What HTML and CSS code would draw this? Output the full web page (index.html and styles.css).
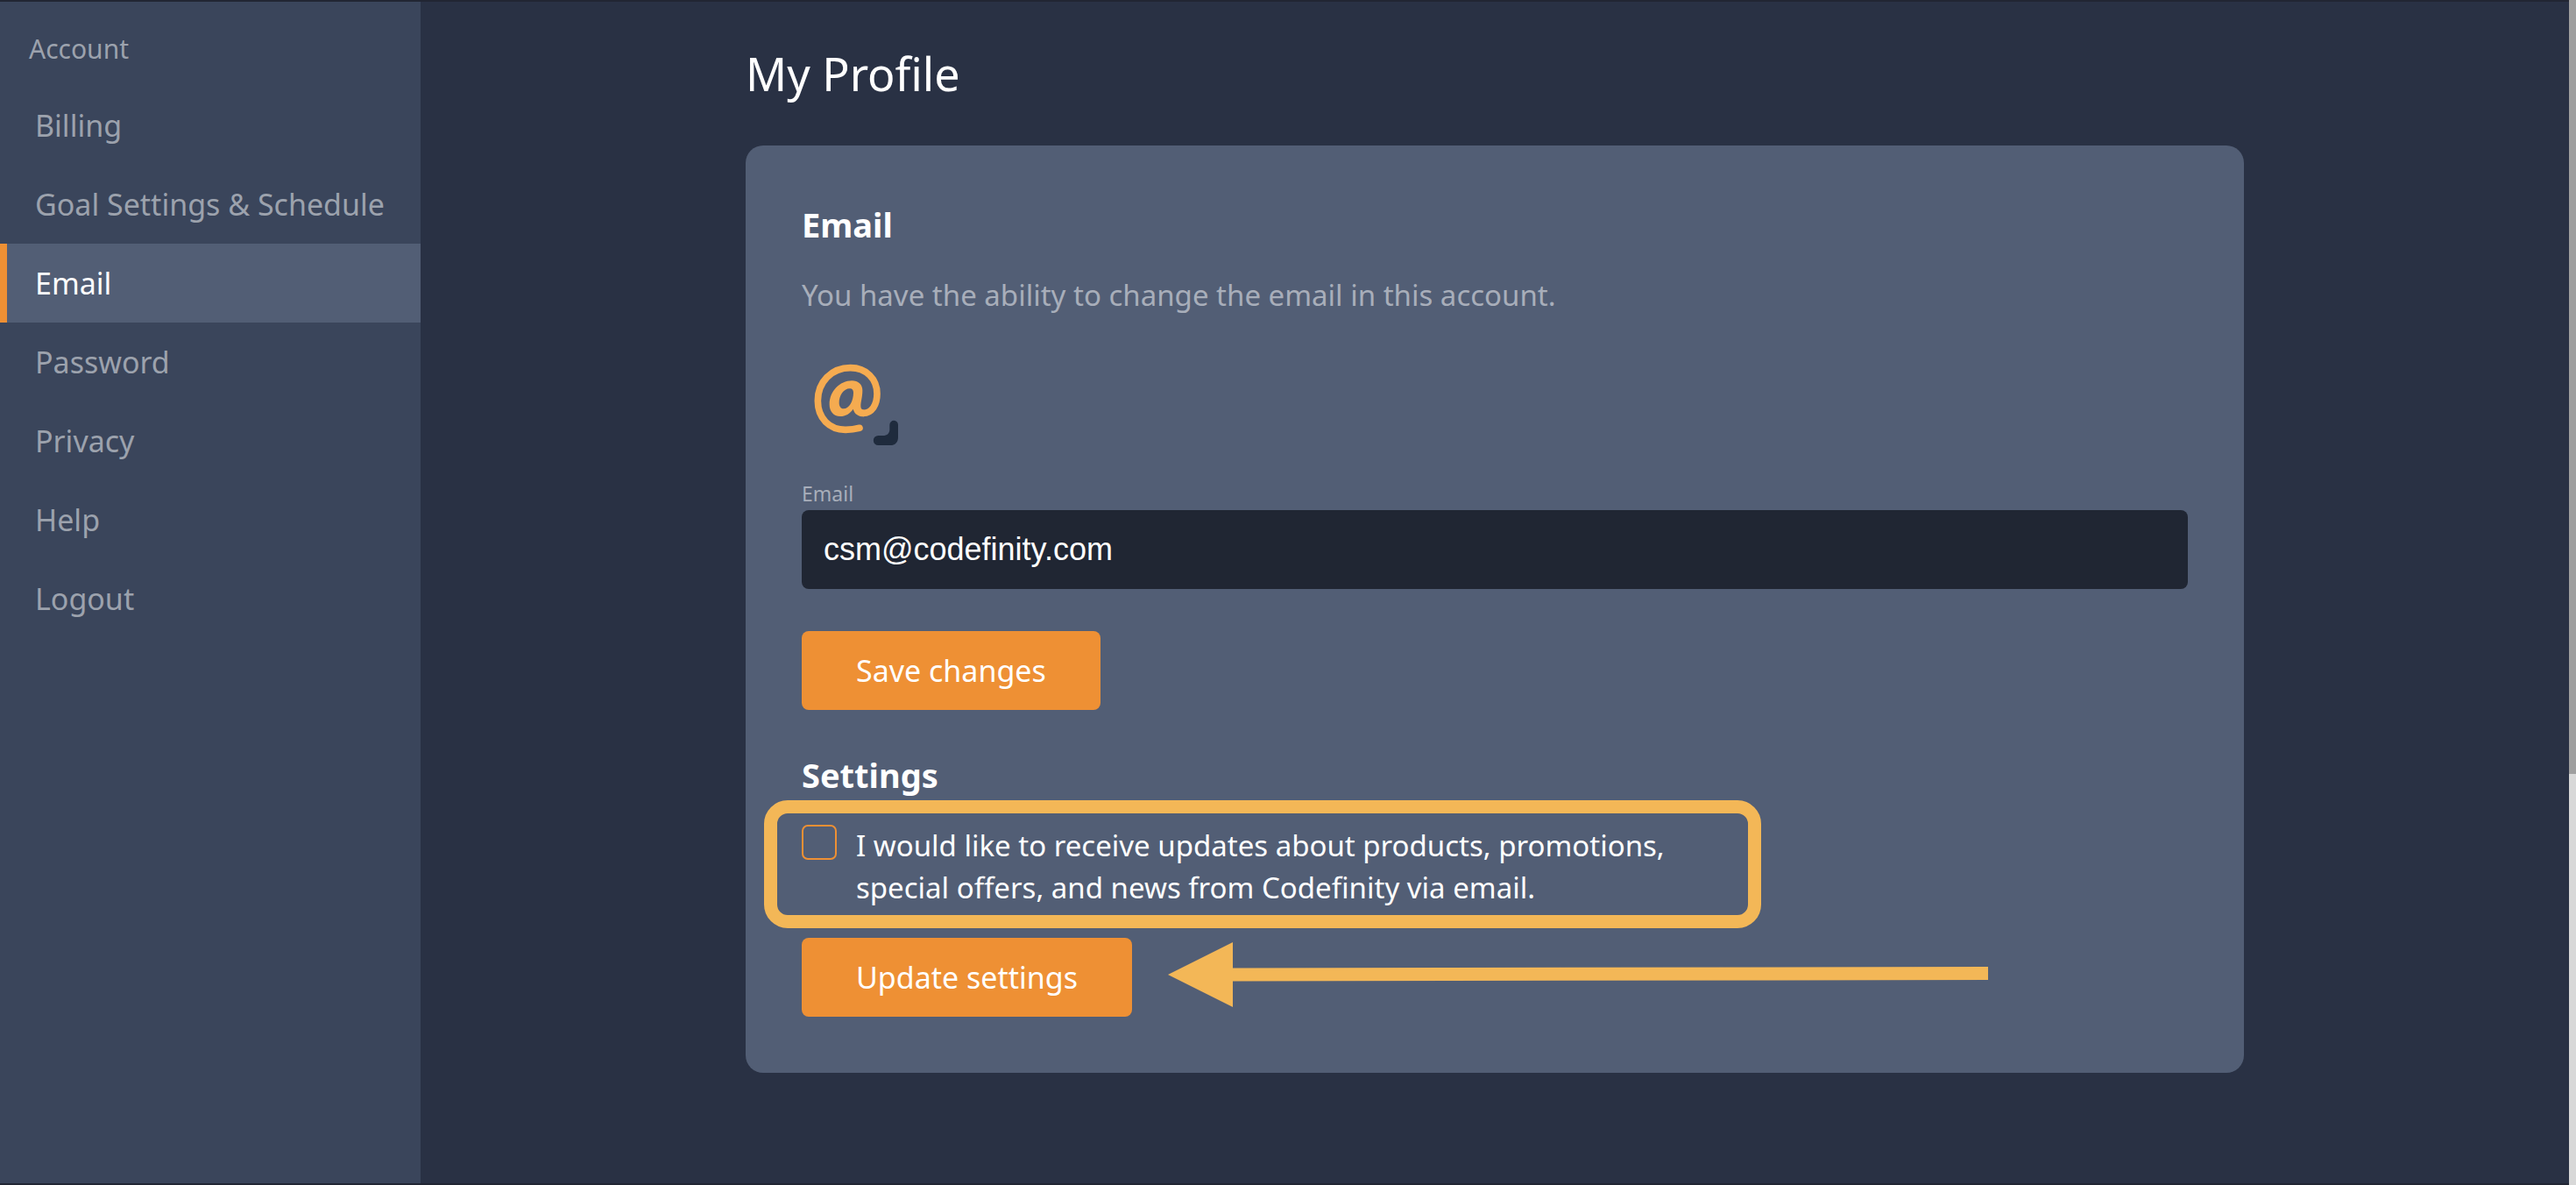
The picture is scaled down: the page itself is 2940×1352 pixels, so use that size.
FILE: index.html
```html
<!DOCTYPE html>
<html lang="en">
<head>
    <meta charset="UTF-8">
    <meta name="viewport" content="width=device-width, initial-scale=1.0">
    <title>My Profile - Email</title>
    <link rel="stylesheet" href="styles.css">
</head>
<body>
    <div class="page">
        <aside class="sidebar">
            <p class="sidebar-title">Account</p>
            <nav class="menu">
                <a class="menu-item" href="#billing">Billing</a>
                <a class="menu-item" href="#goals">Goal Settings &amp; Schedule</a>
                <a class="menu-item active" href="#email" aria-current="page">Email</a>
                <a class="menu-item" href="#password">Password</a>
                <a class="menu-item" href="#privacy">Privacy</a>
                <a class="menu-item" href="#help">Help</a>
                <a class="menu-item" href="#logout">Logout</a>
            </nav>
        </aside>

        <main class="content">
            <div class="profile">
                <h1>My Profile</h1>

                <div class="card">
                    <form class="email-form">
                        <h2>Email</h2>
                        <p class="hint">You have the ability to change the email in this account.</p>

                        <svg class="at-icon" viewBox="45 63 360 360" aria-hidden="true">
                            <path d="M243 325Q220 331 195 331C140 331 100 292 100 232C100 168 146 119 212 119C266 119 303 157 303 208C303 246 285 274 256 274" fill="none" stroke="#f5ab50" stroke-width="23" stroke-linecap="round"/>
                            <path d="M217 163C238 163 253 176 253 196C253 220 247 236 247 250C247 259 251 263 258 263V286C240 286 226 278 221 260C210 276 195 285 177 285C153 285 140 268 140 244C140 200 175 163 217 163ZM210 190C188 190 173 215 173 238C173 251 178 259 188 259C208 259 222 232 222 204C222 195 218 190 210 190Z" fill="#f5ab50" fill-rule="evenodd"/>
                            <path d="M361 299A15 15 0 0 1 375 314V356C375 374 365 384 347 384H307A16 16 0 0 1 307 351H323C338 351 346 343 346 329V314A15 15 0 0 1 361 299Z" fill="#1f2b3d"/>
                        </svg>

                        <label class="field-label" for="email">Email</label>
                        <input class="field" type="email" id="email" value="csm@codefinity.com">
                        <button class="btn" type="button">Save changes</button>
                    </form>

                    <form class="settings-form">
                        <h2>Settings</h2>
                        <div class="option">
                            <input class="checkbox" type="checkbox" id="updates">
                            <label for="updates">I would like to receive updates about products, promotions, special offers, and news from Codefinity via email.</label>
                        </div>
                        <div class="actions">
                            <button class="btn" type="button">Update settings</button>
                            <svg class="arrow" viewBox="0 0 936 80" aria-hidden="true">
                                <path d="M0 37L74 0V29.500L936 28V43L74 44.500V74Z" fill="#f3b757"/>
                            </svg>
                        </div>
                    </form>
                </div>
            </div>
        </main>

        <div class="scrollbar" aria-hidden="true">
            <div class="scrollbar-thumb"></div>
        </div>
    </div>
</body>
</html>
```
FILE: styles.css
```css
* {
    box-sizing: border-box;
}

body {
    margin: 0;
    background-color: #293144;
    color: #fff;
    font-family: "Noto Sans", "Open Sans", sans-serif;
}

h1, h2, p {
    margin: 0;
}

.page {
    display: flex;
    min-height: 100vh;
}

.sidebar,
.content {
    border-top: 2px solid #212633;
    border-bottom: 2px solid #212633;
}

/* Sidebar */
.sidebar {
    flex: 0 0 480px;
    background-color: #3a455b;
}

.sidebar-title {
    padding: 32px 33px 20px;
    font-size: 30px;
    line-height: 44px;
    color: #9ca2ad;
}

.menu-item {
    display: block;
    padding-left: 32px;
    border-left: 8px solid transparent;
    font-size: 34px;
    line-height: 90px;
    color: #9ca2ad;
    text-decoration: none;
    white-space: nowrap;
}

.menu-item.active {
    border-left-color: #ee9034;
    background-color: #525e75;
    color: #fff;
}

/* Content */
.content {
    flex: 1;
    padding: 44px 64px;
}

.profile {
    max-width: 1710px;
    margin: 0 auto;
}

h1 {
    margin-bottom: 44px;
    font-size: 52px;
    line-height: 76px;
    font-weight: 400;
}

h2 {
    font-size: 38px;
    line-height: 52px;
    font-weight: 700;
}

.card {
    display: flex;
    flex-direction: column;
    gap: 48px;
    padding: 64px;
    border-radius: 20px;
    background-color: #525e75;
}

.hint {
    margin: 31px 0 40px;
    font-size: 33px;
    line-height: 48px;
    color: #a8aeba;
}

.at-icon {
    display: block;
    width: 120px;
    height: 120px;
    margin-bottom: 24px;
}

.field-label {
    display: block;
    padding-bottom: 1px;
    font-size: 23px;
    line-height: 36px;
    color: #a8aeba;
}

.field {
    display: block;
    width: 100%;
    height: 90px;
    margin-bottom: 48px;
    padding: 0 25px;
    border: none;
    border-radius: 8px;
    background-color: #202633;
    color: #fff;
    font-family: "Liberation Sans", Arial, sans-serif;
    font-size: 36px;
}

.btn {
    height: 90px;
    padding: 0 62px;
    border: none;
    border-radius: 8px;
    background-color: #ee9034;
    color: #fff;
    font-family: inherit;
    font-size: 34px;
    white-space: nowrap;
    cursor: pointer;
}

.option {
    position: relative;
    display: flex;
    gap: 22px;
    max-width: 1052px;
    margin: 31px 0 33px;
    font-size: 33px;
    line-height: 48px;
}

/* frame drawn around the option */
.option::before {
    content: "";
    position: absolute;
    inset: -28px -43px -22px;
    border: 15px solid #f3b757;
    border-radius: 27px;
    pointer-events: none;
}

.checkbox {
    flex: none;
    appearance: none;
    width: 40px;
    height: 40px;
    margin: 0;
    border: 2px solid #ee9034;
    border-radius: 7px;
    cursor: pointer;
}

.checkbox:checked {
    background-color: #ee9034;
}

.actions {
    display: flex;
    align-items: center;
    gap: 41px;
}

.arrow {
    flex: 0 1 936px;
}

/* Scrollbar */
.scrollbar {
    flex: 0 0 8px;
    background-color: #d8d8d8;
}

.scrollbar-thumb {
    height: 883px;
    background-color: #9f9f9f;
}
```
